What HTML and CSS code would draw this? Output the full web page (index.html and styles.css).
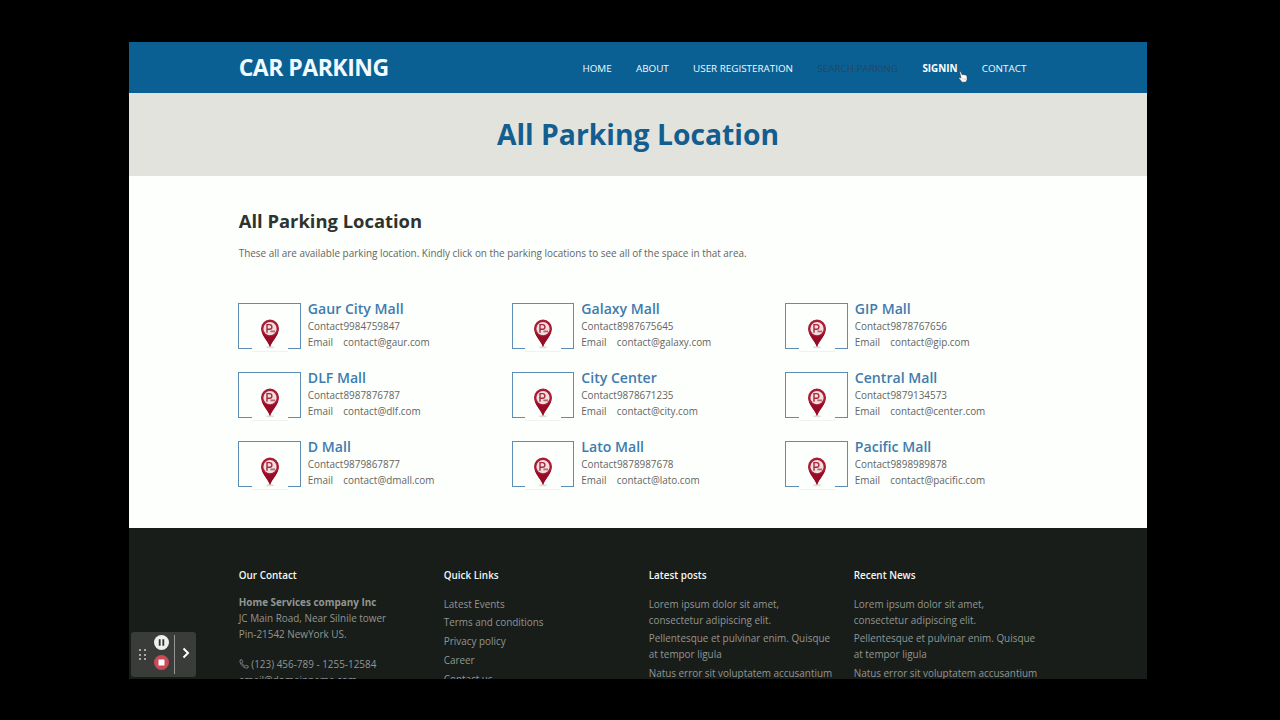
FILE: index.html
```html
<!DOCTYPE html>
<html lang="en">

<head>
    <meta charset="utf-8">
    <title>Car Parking</title>
    <link rel="stylesheet" href="styles.css">
</head>

<body>
    <svg class="symbols" aria-hidden="true">
        <!-- parking pin -->
        <symbol id="pin" viewBox="0 0 20 30">
            <ellipse cx="10" cy="28.3" rx="4" ry="1" fill="#ddd" />
            <path d="M10 28 C8 22 1 16 1 9.5 A9 9 0 0 1 19 9.5 C19 16 12 22 10 28 Z" fill="#a81c35" />
            <path d="M10 28 C8 22 3 18 1.8 13 Q10 22 18.2 13 C17 18 12 22 10 28 Z" fill="#960b25" />
            <circle cx="10" cy="9.7" r="6.6" fill="#f1dfe0" />
            <path d="M7 13.8 V5.6 H9.6 A2.3 2.3 0 0 1 9.6 10.2 H7" fill="none" stroke="#a8283c" stroke-width="1.4" />
            <path d="M10.4 12.4 H15" stroke="#b5686f" stroke-width="1.8" />
        </symbol>
    </svg>
    <div class="screen">
        <header>
            <div class="container nav-row">
                <a class="logo">CAR PARKING</a>
                <nav>
                    <a>HOME</a>
                    <a>ABOUT</a>
                    <a>USER REGISTERATION</a>
                    <a class="active">SEARCH PARKING</a>
                    <a class="hover">SIGNIN</a>
                    <a>CONTACT</a>
                </nav>
            </div>
        </header>
        <div class="banner">
            <h1>All Parking Location</h1>
        </div>
        <main class="container">
            <h2>All Parking Location</h2>
            <p class="intro">These all are available parking location. Kindly click on the parking locations to see all of the space in that area.</p>
            <div class="locations">
                <div class="location">
                    <div class="thumb"><span><svg><use href="#pin" /></svg></span></div>
                    <div class="info">
                        <h3>Gaur City Mall</h3>
                        <p>Contact9984759847</p>
                        <p><span class="label">Email</span>contact@gaur.com</p>
                    </div>
                </div>
                <div class="location">
                    <div class="thumb"><span><svg><use href="#pin" /></svg></span></div>
                    <div class="info">
                        <h3>Galaxy Mall</h3>
                        <p>Contact8987675645</p>
                        <p><span class="label">Email</span>contact@galaxy.com</p>
                    </div>
                </div>
                <div class="location">
                    <div class="thumb"><span><svg><use href="#pin" /></svg></span></div>
                    <div class="info">
                        <h3>GIP Mall</h3>
                        <p>Contact9878767656</p>
                        <p><span class="label">Email</span>contact@gip.com</p>
                    </div>
                </div>
                <div class="location">
                    <div class="thumb"><span><svg><use href="#pin" /></svg></span></div>
                    <div class="info">
                        <h3>DLF Mall</h3>
                        <p>Contact8987876787</p>
                        <p><span class="label">Email</span>contact@dlf.com</p>
                    </div>
                </div>
                <div class="location">
                    <div class="thumb"><span><svg><use href="#pin" /></svg></span></div>
                    <div class="info">
                        <h3>City Center</h3>
                        <p>Contact9878671235</p>
                        <p><span class="label">Email</span>contact@city.com</p>
                    </div>
                </div>
                <div class="location">
                    <div class="thumb"><span><svg><use href="#pin" /></svg></span></div>
                    <div class="info">
                        <h3>Central Mall</h3>
                        <p>Contact9879134573</p>
                        <p><span class="label">Email</span>contact@center.com</p>
                    </div>
                </div>
                <div class="location">
                    <div class="thumb"><span><svg><use href="#pin" /></svg></span></div>
                    <div class="info">
                        <h3>D Mall</h3>
                        <p>Contact9879867877</p>
                        <p><span class="label">Email</span>contact@dmall.com</p>
                    </div>
                </div>
                <div class="location">
                    <div class="thumb"><span><svg><use href="#pin" /></svg></span></div>
                    <div class="info">
                        <h3>Lato Mall</h3>
                        <p>Contact9878987678</p>
                        <p><span class="label">Email</span>contact@lato.com</p>
                    </div>
                </div>
                <div class="location">
                    <div class="thumb"><span><svg><use href="#pin" /></svg></span></div>
                    <div class="info">
                        <h3>Pacific Mall</h3>
                        <p>Contact9898989878</p>
                        <p><span class="label">Email</span>contact@pacific.com</p>
                    </div>
                </div>
            </div>
        </main>
        <footer>
            <div class="container footer-row">
                <div class="widget">
                    <h5>Our Contact</h5>
                    <address>
                        <strong>Home Services company Inc</strong><br>
                        JC Main Road, Near Silnile tower<br>
                        Pin-21542 NewYork US.
                    </address>
                    <p class="phone">
                        <svg viewBox="0 0 10 10"><path d="M1.2 1 L2.6 .6 L3.8 2.8 L2.8 3.8 C3.4 5.2 4.7 6.6 6.2 7.2 L7.2 6.2 L9.4 7.4 L9 8.8 C5.6 10.4 -.2 4.6 1.2 1 Z" fill="none" stroke="#999" stroke-width=".8" /></svg>
                        (123) 456-789 - 1255-12584<br>
                        email@domainname.com
                    </p>
                </div>
                <div class="widget">
                    <h5>Quick Links</h5>
                    <ul>
                        <li>Latest Events</li>
                        <li>Terms and conditions</li>
                        <li>Privacy policy</li>
                        <li>Career</li>
                        <li>Contact us</li>
                    </ul>
                </div>
                <div class="widget">
                    <h5>Latest posts</h5>
                    <ul>
                        <li>Lorem ipsum dolor sit amet, consectetur adipiscing elit.</li>
                        <li>Pellentesque et pulvinar enim. Quisque at tempor ligula</li>
                        <li>Natus error sit voluptatem accusantium</li>
                    </ul>
                </div>
                <div class="widget">
                    <h5>Recent News</h5>
                    <ul>
                        <li>Lorem ipsum dolor sit amet, consectetur adipiscing elit.</li>
                        <li>Pellentesque et pulvinar enim. Quisque at tempor ligula</li>
                        <li>Natus error sit voluptatem accusantium</li>
                    </ul>
                </div>
            </div>
        </footer>

        <!-- screen recorder controls -->
        <div class="recorder">
            <div class="grip"><i></i><i></i><i></i><i></i><i></i><i></i></div>
            <div class="controls">
                <svg viewBox="0 0 14 14"><circle cx="7" cy="7" r="7" fill="#eef0ee" /><path d="M5.3 4 V10 M8.7 4 V10" stroke="#333" stroke-width="1.7" /></svg>
                <svg viewBox="0 0 14 14"><circle cx="7" cy="7" r="7" fill="#c94b58" /><rect x="4.2" y="4.2" width="5.6" height="5.6" rx=".5" fill="#fff" /></svg>
            </div>
            <div class="expand">
                <svg viewBox="0 0 8 12"><path d="M1.5 1.5 L6 6 L1.5 10.5" fill="none" stroke="#fff" stroke-width="2" /></svg>
            </div>
        </div>
        <svg class="cursor" viewBox="0 0 9 12"><path d="M1 .8 Q1.8 .2 2.5 1.2 L3.6 3.8 L4.8 3.4 L6 3.9 L7.2 4 L8.5 5 L8.6 8.5 L7.6 11 L3.6 11.2 L.4 7.2 Q.4 6.2 1.6 6.6 L2.6 7.2 Z" fill="#fff" stroke="#333" stroke-width=".5" /><path d="M4.4 7.4 V9 M5.8 7.4 V9 M7.1 7.4 V9" stroke="#999" stroke-width=".4" /></svg>
    </div>
</body>

</html>
```
FILE: styles.css
```css
* {
    box-sizing: border-box;
}

body {
    margin: 0;
    padding: 42px 0 0 129px;
    height: 720px;
    background-color: #000;
    color: #656565;
    font-family: "Open Sans", sans-serif;
    font-size: 9.92px;
    line-height: 16px;
    overflow: hidden;
}

h1, h2, h3, h5, p, ul {
    margin: 0;
    padding: 0;
}

.symbols {
    display: none;
}

.screen {
    position: relative;
    width: 1018px;
    height: 637px;
    background-color: #fcfffb;
    overflow: hidden;
}

.container {
    width: 820px;
    margin: 0 auto;
    padding: 0 10px 0 10.7px;
}

/* header */
header {
    height: 51px;
    background-color: #0b6093;
    color: #f3faff;
}

.nav-row {
    display: flex;
    align-items: center;
    justify-content: space-between;
    height: 49px;
}

.logo {
    font-size: 23px;
    font-weight: 700;
    letter-spacing: -0.5px;
}

nav {
    display: flex;
    gap: 24.3px;
    padding: 2px 11.7px 0 0;
    font-size: 9.85px;
}

nav .active {
    color: #27465f;
}

nav .hover {
    font-weight: 700;
    color: #fff;
}

.banner {
    display: flex;
    align-items: center;
    justify-content: center;
    height: 83px;
    padding-bottom: 2px;
    background-color: #e2e3dd;
}

h1 {
    color: #145d8f;
    font-size: 28.3px;
    line-height: 40px;
}

/* locations */
main {
    height: 351.5px;
}

h2 {
    padding-top: 33px;
    color: #2e332f;
    font-size: 18.4px;
    line-height: 24px;
}

.intro {
    padding-top: 12px;
}

.locations {
    display: grid;
    grid-template-columns: repeat(3, 273.5px);
    grid-auto-rows: 69.2px;
    padding-top: 40px;
}

.location {
    display: flex;
    gap: 7px;
}

.thumb {
    display: flex;
    justify-content: center;
    width: 62.5px;
    height: 46px;
    margin-top: 1.6px;
    margin-left: -0.4px;
    border: 1px solid #5d8cb5;
}

.thumb span {
    width: 36px;
    height: 48px;
    padding: 15px 0 0 8px;
    background-color: #fdfffc;
    border-bottom: 1px solid #eff2ee;
}

.thumb svg {
    display: block;
    width: 20px;
    height: 30px;
}

h3 {
    color: #3f7bae;
    font-size: 14.1px;
    font-weight: 600;
    line-height: 16px;
    margin-bottom: 0.5px;
}

.label {
    display: inline-block;
    width: 35.5px;
}

/* footer */
footer {
    height: 160px;
    background-color: #181d19;
    color: #929592;
}

.footer-row {
    display: grid;
    grid-template-columns: repeat(4, 205px);
    padding-top: 39.5px;
}

.widget {
    width: 186px;
}

h5 {
    color: #f4f7f4;
    font-size: 9.92px;
    font-weight: 600;
    line-height: 16px;
    margin-bottom: 12.5px;
}

address {
    margin-top: -1.2px;
    font-style: normal;
}

.phone {
    margin-top: 14px;
}

.phone svg {
    width: 10px;
    height: 10px;
    vertical-align: -1px;
}

ul {
    list-style: none;
}

li {
    margin-bottom: 2.9px;
}

/* recorder */
.recorder {
    position: absolute;
    left: 2px;
    top: 590px;
    display: flex;
    align-items: center;
    width: 65px;
    height: 45px;
    padding-left: 8px;
    border-radius: 3px;
    background-color: #393c39;
}

.grip {
    display: grid;
    grid-template-columns: 2px 2px;
    gap: 2.5px;
}

.grip i {
    width: 2px;
    height: 2px;
    border-radius: 1px;
    background-color: #ccc;
}

.controls {
    display: flex;
    flex-direction: column;
    gap: 5px;
    width: 29px;
    height: 39px;
    padding-left: 8.5px;
    margin-right: 7px;
    border-right: 1px solid #929592;
}

.controls svg {
    width: 15px;
    height: 15px;
}

.expand svg {
    display: block;
    width: 8px;
    height: 12px;
    margin-bottom: 4px;
}

.cursor {
    position: absolute;
    left: 829px;
    top: 29px;
    width: 10px;
    height: 12px;
}
```
